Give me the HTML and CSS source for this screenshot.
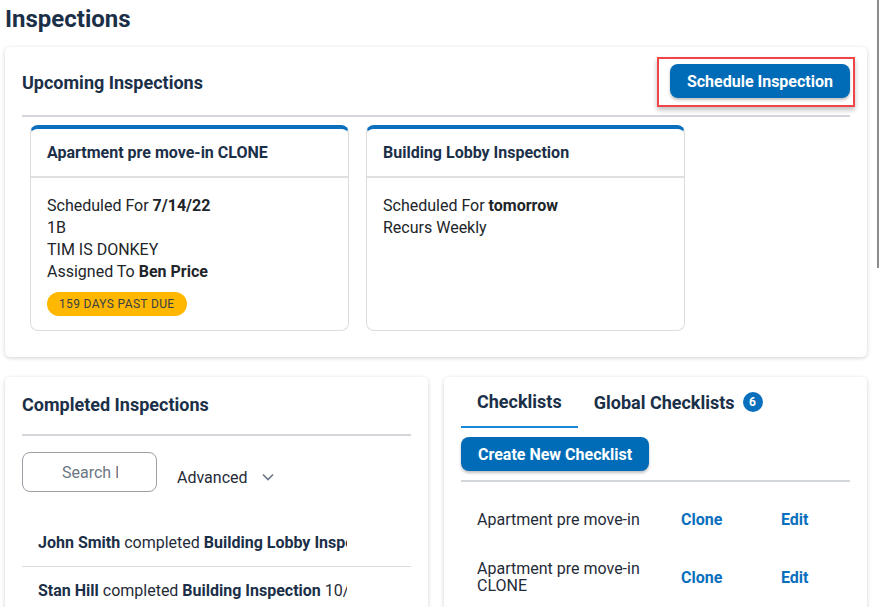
FILE: index.html
```html
<!DOCTYPE html>
<html lang="en">
<head>
<meta charset="UTF-8" />
<meta name="viewport" content="width=device-width, initial-scale=1.0" />
<title>Inspections</title>
<link rel="stylesheet" href="styles.css">
</head>
<body>
<div class="page">
  <h1 class="page-title">Inspections</h1>

  <!-- Upcoming -->
  <section class="panel upcoming">
    <div class="panel-head">
      <h2 class="panel-title">Upcoming Inspections</h2>
      <div class="highlight">
        <button class="btn">Schedule Inspection</button>
      </div>
    </div>
    <div class="divider"></div>

    <div class="insp-cards">
      <div class="insp-card">
        <div class="insp-card-head">Apartment pre move-in CLONE</div>
        <div class="insp-card-body">
          <p>Scheduled For <b>7/14/22</b></p>
          <p>1B</p>
          <p>TIM IS DONKEY</p>
          <p>Assigned To <b>Ben Price</b></p>
          <span class="due">159 Days Past Due</span>
        </div>
      </div>
      <div class="insp-card">
        <div class="insp-card-head">Building Lobby Inspection</div>
        <div class="insp-card-body">
          <p>Scheduled For <b>tomorrow</b></p>
          <p>Recurs Weekly</p>
        </div>
      </div>
    </div>
  </section>

  <div class="lower">
    <!-- Completed -->
    <section class="panel completed">
      <h2 class="panel-title">Completed Inspections</h2>
      <div class="divider"></div>
      <div class="filters">
        <input class="search" type="text" placeholder="Search Inspections" />
        <span class="advanced">Advanced
          <svg width="12" height="8" viewBox="0 0 12 8"><path d="M1 1.5l5 5 5-5" fill="none" stroke="#6c7785" stroke-width="1.6"/></svg>
        </span>
      </div>
      <ul class="done-list">
        <li><span class="done-text"><b>John Smith</b> completed <b>Building Lobby Inspection</b> 10/12/22</span></li>
        <li><span class="done-text"><b>Stan Hill</b> completed <b>Building Inspection</b> 10/10/22</span></li>
      </ul>
    </section>

    <!-- Checklists -->
    <section class="panel checklists">
      <div class="tabs">
        <span class="tab active">Checklists</span>
        <span class="tab">Global Checklists <span class="count">6</span></span>
      </div>
      <button class="btn">Create New Checklist</button>
      <div class="divider"></div>
      <div class="check-rows">
        <div class="check-row">
          <span class="check-name">Apartment pre move-in</span>
          <a class="link">Clone</a>
          <a class="link">Edit</a>
        </div>
        <div class="check-row">
          <span class="check-name">Apartment pre move-in CLONE</span>
          <a class="link">Clone</a>
          <a class="link">Edit</a>
        </div>
      </div>
    </section>
  </div>
</div>
<div class="scroll-edge"></div>
</body>
</html>
```

FILE: styles.css
```css
* {
  box-sizing: border-box;
  margin: 0;
  padding: 0;
}
body {
  background: #fff;
  font-family: Roboto, 'Liberation Sans', sans-serif;
  color: #212529;
  font-size: 16px;
  overflow: hidden;
}
.page {
  padding: 5px 16px 0 5px;
}
.page-title {
  font-size: 24px;
  line-height: 28px;
  font-weight: 700;
  color: #1b3048;
  margin-bottom: 14px;
}
.panel {
  background: #fff;
  border-radius: 5px;
  box-shadow: 0 1px 4px rgba(0,0,0,0.18);
  padding: 18px 17px 26px;
}
.panel-title {
  font-size: 18px;
  font-weight: 700;
  color: #1b3048;
}
.panel-head {
  display: flex;
  justify-content: space-between;
  align-items: center;
  height: 34px;
}
.highlight {
  border: 2px solid #ef4547;
  padding: 5px 3px 7px 11px;
  margin-right: -5px;
  box-shadow: 0 3px 5px rgba(0,0,0,0.25);
}
.btn {
  display: block;
  height: 34px;
  padding: 0 17px;
  background: #006cb7;
  color: #fff;
  border: none;
  border-radius: 8px;
  font-family: inherit;
  font-size: 16px;
  font-weight: 700;
  box-shadow: 0 2px 3px rgba(0,0,0,0.25);
}
.divider {
  height: 2px;
  background: #d3d7dc;
}
.upcoming .divider {
  margin-top: 16px;
}
.insp-cards {
  display: flex;
  gap: 17px;
  margin: 8px 0 0 8px;
}
.insp-card {
  width: 319px;
  height: 206px;
  border: 1px solid #dcdcdc;
  border-top: 4px solid #0a6fbd;
  border-radius: 8px;
}
.insp-card-head {
  height: 49px;
  padding: 0 16px;
  display: flex;
  align-items: center;
  font-weight: 700;
  color: #1b3048;
  border-bottom: 2px solid #e0e0e0;
}
.insp-card-body {
  padding: 17px 16px;
  line-height: 22px;
}
.due {
  display: inline-block;
  margin-top: 9px;
  height: 24px;
  line-height: 24px;
  padding: 0 12px;
  background: #ffb700;
  border-radius: 12px;
  font-size: 12px;
  letter-spacing: 0.35px;
  text-transform: uppercase;
  color: #3a3f45;
}
.lower {
  display: flex;
  gap: 16px;
  margin-top: 20px;
}
.lower .panel {
  flex: 0 0 423px;
  height: 260px;
}
.completed .panel-title {
  line-height: 20px;
}
.completed .divider {
  margin-top: 19px;
}
.filters {
  display: flex;
  align-items: center;
  margin-top: 16px;
}
.search {
  width: 135px;
  height: 40px;
  border: 1px solid #9aa0a6;
  border-radius: 8px;
  padding: 0 38px 0 39px;
  font-family: inherit;
  font-size: 16px;
}
.search::placeholder {
  color: #6b7783;
}
.advanced {
  margin-left: 20px;
  margin-top: 10px;
  display: flex;
  align-items: center;
  gap: 14px;
  color: #1f2b38;
}
.done-list {
  list-style: none;
  margin-top: 41px;
}
.done-list li {
  padding: 0 0 0 16px;
  line-height: 20px;
  color: #1f2b38;
}
.done-list li + li {
  border-top: 1px solid #dcdcdc;
  margin-top: 13px;
  padding-top: 14px;
}
.done-text {
  display: block;
  width: 309px;
  white-space: nowrap;
  overflow: hidden;
}
.done-text b {
  color: #1b3048;
}
.checklists {
  padding-top: 10px;
}
.tabs {
  display: flex;
  height: 41px;
  margin-bottom: 9px;
}
.tab {
  display: flex;
  align-items: center;
  padding: 0 16px;
  font-size: 18px;
  font-weight: 700;
  color: #1b3048;
  height: 30px;
}
.tab.active {
  border-bottom: 2px solid #1a86d9;
  height: 41px;
  padding-bottom: 11px;
}
.count {
  display: inline-flex;
  align-items: center;
  justify-content: center;
  width: 20px;
  height: 20px;
  margin-left: 8px;
  border-radius: 50%;
  background: #0a6fbd;
  color: #fff;
  font-size: 12px;
}
.checklists .divider {
  margin-top: 9px;
}
.check-rows {
  margin-top: 8px;
}
.check-row {
  display: grid;
  grid-template-columns: 204px 100px auto;
  align-items: center;
  min-height: 58px;
  padding-left: 16px;
}
.check-name {
  line-height: 17px;
  color: #1f2b38;
  padding-right: 24px;
}
.link {
  color: #0a6fbd;
  font-weight: 700;
}
.scroll-edge {
  position: fixed;
  top: 0;
  right: 4px;
  width: 2px;
  height: 268px;
  background: #8c8c8c;
}
```
